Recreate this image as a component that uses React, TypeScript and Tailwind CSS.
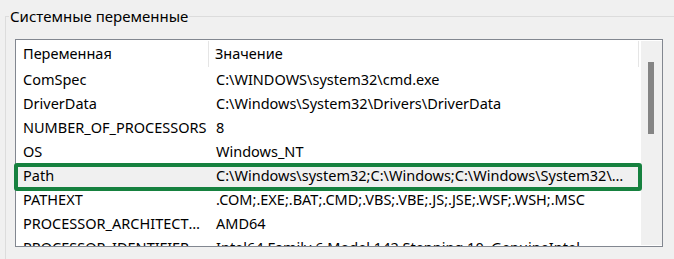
const ROWS: [string, string][] = [
  ["ComSpec", "C:\\WINDOWS\\system32\\cmd.exe"],
  ["DriverData", "C:\\Windows\\System32\\Drivers\\DriverData"],
  ["NUMBER_OF_PROCESSORS", "8"],
  ["OS", "Windows_NT"],
  ["Path", "C:\\Windows\\system32;C:\\Windows;C:\\Windows\\System32\\Wbem;C:\\Windows\\System32\\WindowsPowerShell\\v1.0\\"],
  ["PATHEXT", ".COM;.EXE;.BAT;.CMD;.VBS;.VBE;.JS;.JSE;.WSF;.WSH;.MSC"],
  ["PROCESSOR_ARCHITECTURE", "AMD64"],
  ["PROCESSOR_IDENTIFIER", "Intel64 Family 6 Model 142 Stepping 10, GenuineIntel"],
];

export default function App() {
  return (
    <div className="relative w-[674px] h-[259px] overflow-hidden bg-[#f0f0f0] text-[14.5px] text-black font-['Noto_Sans',sans-serif]">
      {/* group box */}
      <div className="ml-[5px] mt-[16px] h-[300px] border-l border-t border-[#dcdcdc] pl-[9px] pt-[22px]">
        <div className="flex w-[648px] h-[208px] border border-[#828790] bg-white overflow-hidden">
          <div className="w-[625px] flex flex-col overflow-hidden">
            <div className="flex h-[28px] shrink-0 items-center">
              <div className="w-[193px] h-[26px] pl-[7px] flex items-center border-r border-[#e5e5e5]">Переменная</div>
              <div className="w-[430px] h-[26px] pl-[6px] flex items-center border-r border-[#e5e5e5]">Значение</div>
            </div>
            {ROWS.map(([name, value]) => (
              <div
                key={name}
                className={`flex h-[24px] items-center shrink-0 ${name === "Path" ? "bg-[#f0f0f0]" : ""}`}
              >
                <div className="w-[194px] pl-[7px] truncate">{name}</div>
                <div className="w-[418px] pl-[6px] truncate">{value}</div>
              </div>
            ))}
          </div>
          <div className="w-[21px] mt-[1px] mb-[1px] bg-[#f0f0f0] pt-[21px] pl-[7px]">
            <div className="w-[6px] h-[72px] bg-[#858585]" />
          </div>
        </div>
      </div>

      {/* group title over the frame line */}
      <div className="absolute left-[9px] top-[5px] px-[1px] bg-[#f0f0f0] leading-[22px] text-[15px]">Системные переменные</div>

      {/* highlight around the Path row */}
      <div className="absolute left-[14px] top-[163px] w-[628px] h-[28px] border-[4px] border-[#16813f] rounded-[3px]" />
    </div>
  );
}
